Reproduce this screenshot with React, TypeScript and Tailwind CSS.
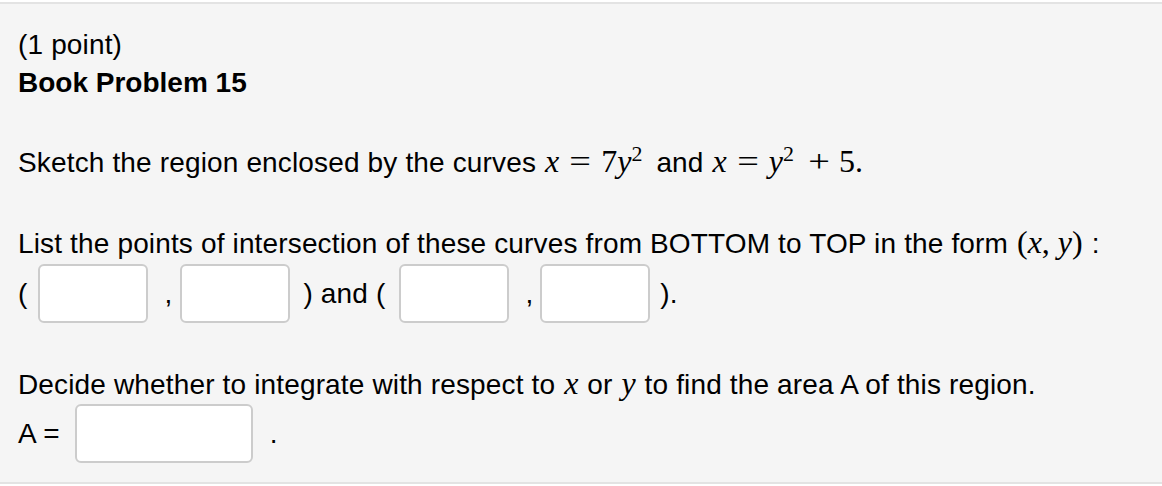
import React from "react";

/**
 * WeBWorK-style problem card: point value, title, the prompt with inline math,
 * and the answer blanks.
 */
export default function App() {
  return (
    <div className="min-h-screen bg-white pt-[2px] font-['Liberation_Sans',Arial,sans-serif] text-[28px] tracking-[0.15px] text-black">
      <div className="border-y-2 border-[#e3e3e3] bg-[#f5f5f5] pb-[19px] pl-[18px] pt-[22px]">
        <div className="leading-[38px]">(1 point)</div>
        <div className="font-bold leading-[38px] tracking-normal">Book Problem 15</div>

        <p className="mt-[42px] leading-[38px]">
          Sketch the region enclosed by the curves{" "}
          <Math>
            <V>x</V>
            <Op w="w-[22px]">=</Op>7<V>y</V>
            <Sup>2</Sup>
          </Math>{" "}
          and{" "}
          <Math>
            <V>x</V>
            <Op w="w-[22px]">=</Op>
            <V>y</V>
            <Sup>2</Sup>
            <Op w="w-[20px]">+</Op>5.
          </Math>
        </p>

        <p className="mt-[43px] leading-[38px]">
          List the points of intersection of these curves from BOTTOM to TOP in
          the form{" "}
          <Math>
            (<V>x</V>, <V>y</V>)
          </Math>{" "}
          :
        </p>

        <div className="mt-[1px] flex h-[59px] items-center">
          <span>(</span>
          <Blank className="ml-[11px]" />
          <span className="ml-[16px]">,</span>
          <Blank className="ml-[8px]" />
          <span className="ml-[13px] whitespace-pre">) and (</span>
          <Blank className="ml-[14px]" />
          <span className="ml-[16px]">,</span>
          <Blank className="ml-[7px]" />
          <span className="ml-[10px]">).</span>
        </div>

        <p className="mt-[43px] leading-[38px]">
          Decide whether to integrate with respect to{" "}
          <Math>
            <V>x</V>
          </Math>{" "}
          or{" "}
          <Math>
            <V>y</V>
          </Math>{" "}
          to find the area A of this region.
        </p>

        <div className="flex h-[59px] items-center">
          <span className="whitespace-pre">A =</span>
          <Blank className="ml-[15px] w-[178px]" />
          <span className="ml-[17px]">.</span>
        </div>
      </div>
    </div>
  );
}

function Math({ children }: { children: React.ReactNode }) {
  return (
    <span className="mx-[1px] font-['Liberation_Serif','Times_New_Roman',serif] text-[32px] leading-none tracking-normal">
      {children}
    </span>
  );
}

function V({ children }: { children: React.ReactNode }) {
  return <i className="italic">{children}</i>;
}

function Op({ children, w }: { children: React.ReactNode; w: string }) {
  return (
    <span className={`mx-[10px] inline-block scale-x-[1.2] text-center ${w}`}>
      {children}
    </span>
  );
}

function Sup({ children }: { children: React.ReactNode }) {
  return <sup className="mr-[5px] text-[22px]">{children}</sup>;
}

function Blank({ className = "" }: { className?: string }) {
  return (
    <input
      type="text"
      className={`h-[59px] w-[110px] shrink-0 rounded-[6px] border-2 border-[#cccccc] bg-white ${className}`}
    />
  );
}
